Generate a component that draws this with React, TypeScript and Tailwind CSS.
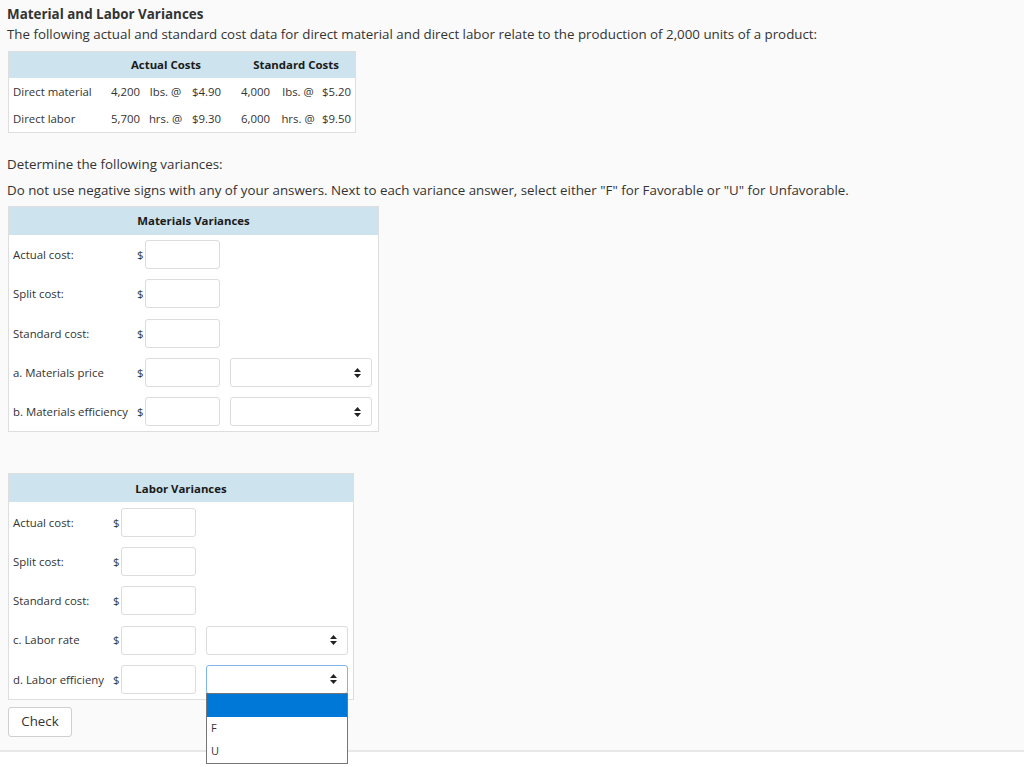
import { ReactNode } from "react";

const font = { fontFamily: '"Open Sans", "Liberation Sans", sans-serif' };

function Arrows() {
    return (
        <svg width="7" height="10" viewBox="0 0 7 10" className="fill-[#222]">
            <path d="M3.5 0 L7 4 L0 4 Z" />
            <path d="M0 6 L7 6 L3.5 10 Z" />
        </svg>
    );
}

function Select({ focused, children }: { focused?: boolean; children?: ReactNode }) {
    return (
        <div
            className={
                "relative w-[142px] h-[29px] bg-white rounded-[3px] border flex items-center justify-end pr-[10px] " +
                (focused ? "border-[#7fb4e6]" : "border-[#dcdcdc]")
            }
        >
            <Arrows />
            {children}
        </div>
    );
}

interface Row {
    label: string;
    select?: boolean;
    focused?: boolean;
}

function VarianceTable({
    title,
    rows,
    labelWidth,
    width,
    dropdown,
}: {
    title: string;
    rows: Row[];
    labelWidth: string;
    width: string;
    dropdown?: boolean;
}) {
    return (
        <div className={"bg-white border border-[#dedede] " + width}>
            <div className="h-[28px] bg-[#cde3ee] flex items-center justify-center text-[11.4px] font-bold text-[#1a1a1a]">
                {title}
            </div>
            {rows.map((r) => (
                <div key={r.label} className="h-[39.3px] flex items-center">
                    <div className={"pl-[4px] text-[11.4px] text-[#333] " + labelWidth}>{r.label}</div>
                    <div className="w-[8px] text-[11.4px] text-[#333]">$</div>
                    <div className="w-[75px] h-[29px] bg-white border border-[#dcdcdc] rounded-[3px]" />
                    {r.select && (
                        <div className="ml-[10px]">
                            <Select focused={r.focused}>
                                {r.focused && dropdown && (
                                    <div className="absolute left-[-1px] top-[27px] w-[142px] bg-white border border-[#767676] text-[11px] text-[#333] z-10">
                                        <div className="h-[23px] bg-[#0078d7]" />
                                        <div className="h-[23px] flex items-center pl-[4px]">F</div>
                                        <div className="h-[23px] flex items-center pl-[4px]">U</div>
                                    </div>
                                )}
                            </Select>
                        </div>
                    )}
                </div>
            ))}
        </div>
    );
}

export default function App() {
    const materials: Row[] = [
        { label: "Actual cost:" },
        { label: "Split cost:" },
        { label: "Standard cost:" },
        { label: "a. Materials price", select: true },
        { label: "b. Materials efficiency", select: true },
    ];
    const labor: Row[] = [
        { label: "Actual cost:" },
        { label: "Split cost:" },
        { label: "Standard cost:" },
        { label: "c. Labor rate", select: true },
        { label: "d. Labor efficieny", select: true, focused: true },
    ];

    return (
        <div className="bg-white min-h-[767px]" style={font}>
            <div className="bg-[#fafafa] min-h-[752px] border-b-2 border-[#e8e8e8] px-[7px] pt-[5px] text-[#333]">
                <div className="text-[13.4px] font-bold leading-[18px]">Material and Labor Variances</div>
                <div className="text-[13.33px] leading-[18px] mt-[2px]">
                    The following actual and standard cost data for direct material and direct labor relate to the
                    production of 2,000 units of a product:
                </div>

                <div className="mt-[8px] ml-[1px] w-[348px] bg-white border border-[#dedede] text-[11.4px]">
                    <div className="h-[26px] bg-[#cde3ee] flex items-center font-bold text-[#1a1a1a]">
                        <div className="w-[102px]" />
                        <div className="w-[110px] text-center">Actual Costs</div>
                        <div className="w-[20px]" />
                        <div className="w-[110px] text-center">Standard Costs</div>
                    </div>
                    {[
                        ["Direct material", "4,200", "lbs. @", "$4.90", "4,000", "lbs. @", "$5.20"],
                        ["Direct labor", "5,700", "hrs. @", "$9.30", "6,000", "hrs. @", "$9.50"],
                    ].map((r) => (
                        <div key={r[0]} className="h-[27px] flex items-center">
                            <div className="w-[102px] pl-[4px]">{r[0]}</div>
                            <div className="w-[36px]">{r[1]}</div>
                            <div className="w-[37px] text-center">{r[2]}</div>
                            <div className="w-[8px]" />
                            <div className="w-[49px]">{r[3]}</div>
                            <div className="w-[37px]">{r[4]}</div>
                            <div className="w-[40px] text-center">{r[5]}</div>
                            <div className="w-[4px]" />
                            <div>{r[6]}</div>
                        </div>
                    ))}
                </div>

                <div className="text-[13.33px] leading-[18px] mt-[22px]">Determine the following variances:</div>
                <div className="text-[13.33px] leading-[18px] mt-[8px]">
                    Do not use negative signs with any of your answers. Next to each variance answer, select either
                    "F" for Favorable or "U" for Unfavorable.
                </div>

                <div className="mt-[7px] ml-[1px]">
                    <VarianceTable title="Materials Variances" rows={materials} labelWidth="w-[128px]" width="w-[371px]" />
                </div>

                <div className="mt-[41px] ml-[1px]">
                    <VarianceTable
                        title="Labor Variances"
                        rows={labor}
                        labelWidth="w-[104px]"
                        width="w-[346px]"
                        dropdown
                    />
                </div>

                <button className="mt-[7px] ml-[1px] w-[64px] h-[30px] bg-white border border-[#d0d0d0] rounded-[3px] text-[13.33px] text-[#333]">
                    Check
                </button>
            </div>
        </div>
    );
}
